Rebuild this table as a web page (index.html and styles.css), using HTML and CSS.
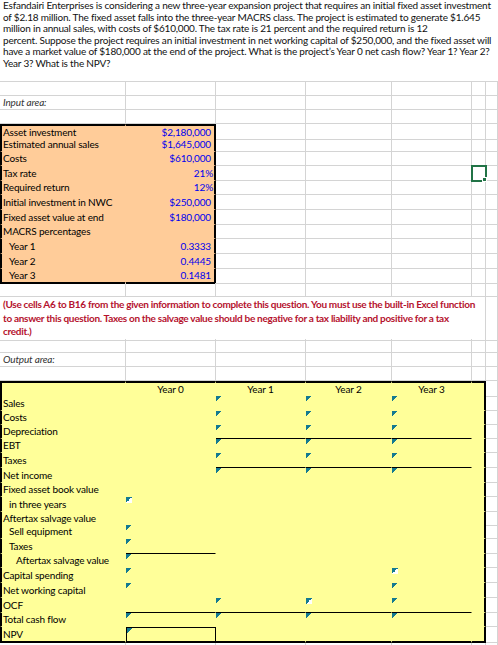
FILE: index.html
```html
<!DOCTYPE html>
<html>
<head>
<meta charset="utf-8">
<link rel="stylesheet" href="styles.css">
</head>
<body>
<div class="intro">Esfandairi Enterprises is considering a new three-year expansion project that requires an initial fixed asset investment<br>of $2.18 million. The fixed asset falls into the three-year MACRS class. The project is estimated to generate $1.645<br>million in annual sales, with costs of $610,000. The tax rate is 21 percent and the required return is 12<br>percent. Suppose the project requires an initial investment in net working capital of $250,000, and the fixed asset will<br>have a market value of $180,000 at the end of the project. What is the project’s Year 0 net cash flow? Year 1? Year 2?<br>Year 3? What is the NPV?</div>
<div class="sheet">
  <div class="row h14"><span></span><span></span><span></span><span></span><span></span><span></span><span></span></div>
  <div class="row h14"><span class="it">Input area:</span><span></span><span></span><span></span><span></span><span></span><span></span></div>
  <div class="row h14"><span></span><span></span><span></span><span></span><span></span><span></span><span></span></div>

  <div class="row h14"><span class="o bl bt">Asset investment</span><span class="o br bt r v">$2,180,000</span><span></span><span></span><span></span><span></span><span></span></div>
  <div class="row h14"><span class="o bl">Estimated annual sales</span><span class="o br r v">$1,645,000</span><span></span><span></span><span></span><span></span><span></span></div>
  <div class="row h14"><span class="o bl">Costs</span><span class="o br r v">$610,000</span><span></span><span></span><span></span><span></span><span></span></div>
  <div class="row h15"><span class="o bl">Tax rate</span><span class="o br r v pc">21%</span><span></span><span></span><span></span><span class="sel"></span><span></span></div>
  <div class="row h14"><span class="o bl">Required return</span><span class="o br r v pc">12%</span><span></span><span></span><span></span><span></span><span></span></div>
  <div class="row h15"><span class="o bl">Initial investment in NWC</span><span class="o br r v">$250,000</span><span></span><span></span><span></span><span></span><span></span></div>
  <div class="row h15"><span class="o bl">Fixed asset value at end</span><span class="o br r v">$180,000</span><span></span><span></span><span></span><span></span><span></span></div>
  <div class="row h14"><span class="o bl">MACRS percentages</span><span class="o br"></span><span></span><span></span><span></span><span></span><span></span></div>
  <div class="row h15"><span class="o bl i1">Year 1</span><span class="o br r v">0.3333</span><span></span><span></span><span></span><span></span><span></span></div>
  <div class="row h15"><span class="o bl i1">Year 2</span><span class="o br r v">0.4445</span><span></span><span></span><span></span><span></span><span></span></div>
  <div class="row h14"><span class="o bl bb i1">Year 3</span><span class="o br bb r v">0.1481</span><span></span><span></span><span></span><span></span><span></span></div>

  <div class="row h14"><span></span><span></span><span></span><span></span><span></span><span></span><span></span></div>
  <div class="row h42"><span class="note">(Use cells A6 to B16 from the given information to complete this question. You must use the built-in Excel function<br>to answer this question. Taxes on the salvage value should be negative for a tax liability and positive for a tax<br>credit.)</span><span></span></div>
  <div class="row h14"><span></span><span></span><span></span><span></span><span></span><span></span><span></span></div>
  <div class="row h14"><span class="it">Output area:</span><span></span><span></span><span></span><span></span><span></span><span></span></div>
  <div class="row h14"><span></span><span></span><span></span><span></span><span></span><span></span><span></span></div>

  <div class="row h15"><span class="y bl bt"></span><span class="y bt ctr">Year 0</span><span class="y bt ctr">Year 1</span><span class="y bt ctr">Year 2</span><span class="y bt ctr">Year 3</span><span class="y bt br"></span><span></span></div>
  <div class="row h15"><span class="y bl">Sales</span><span class="y"></span><span class="y t"></span><span class="y t"></span><span class="y t"></span><span class="y br"></span><span></span></div>
  <div class="row h14"><span class="y bl">Costs</span><span class="y"></span><span class="y t"></span><span class="y t"></span><span class="y t"></span><span class="y br"></span><span></span></div>
  <div class="row h14"><span class="y bl">Depreciation</span><span class="y"></span><span class="y t ul"></span><span class="y t ul"></span><span class="y t ul"></span><span class="y br"></span><span></span></div>
  <div class="row h14"><span class="y bl">EBT</span><span class="y"></span><span class="y t"></span><span class="y t"></span><span class="y t"></span><span class="y br"></span><span></span></div>
  <div class="row h15"><span class="y bl">Taxes</span><span class="y"></span><span class="y t ul"></span><span class="y t ul"></span><span class="y t ul"></span><span class="y br"></span><span></span></div>
  <div class="row h15"><span class="y bl">Net income</span><span class="y"></span><span class="y t"></span><span class="y t"></span><span class="y t"></span><span class="y br"></span><span></span></div>
  <div class="row h14"><span class="y bl">Fixed asset book value</span><span class="y"></span><span class="y"></span><span class="y"></span><span class="y"></span><span class="y br"></span><span></span></div>
  <div class="row h15"><span class="y bl i1">in three years</span><span class="y tw"></span><span class="y"></span><span class="y"></span><span class="y"></span><span class="y br"></span><span></span></div>
  <div class="row h13"><span class="y bl">Aftertax salvage value</span><span class="y"></span><span class="y"></span><span class="y"></span><span class="y"></span><span class="y br"></span><span></span></div>
  <div class="row h14"><span class="y bl i1">Sell equipment</span><span class="y t"></span><span class="y"></span><span class="y"></span><span class="y"></span><span class="y br"></span><span></span></div>
  <div class="row h15"><span class="y bl i1">Taxes</span><span class="y t ul"></span><span class="y"></span><span class="y"></span><span class="y"></span><span class="y br"></span><span></span></div>
  <div class="row h14"><span class="y bl i2">Aftertax salvage value</span><span class="y t"></span><span class="y"></span><span class="y"></span><span class="y"></span><span class="y br"></span><span></span></div>
  <div class="row h15"><span class="y bl">Capital spending</span><span class="y t"></span><span class="y"></span><span class="y"></span><span class="y tw"></span><span class="y br"></span><span></span></div>
  <div class="row h15"><span class="y bl">Net working capital</span><span class="y t"></span><span class="y"></span><span class="y"></span><span class="y t"></span><span class="y br"></span><span></span></div>
  <div class="row h15"><span class="y bl">OCF</span><span class="y ul"></span><span class="y t ul"></span><span class="y tw ul"></span><span class="y t ul"></span><span class="y br"></span><span></span></div>
  <div class="row h14"><span class="y bl">Total cash flow</span><span class="y t"></span><span class="y t"></span><span class="y t"></span><span class="y t"></span><span class="y br"></span><span></span></div>
  <div class="row h16"><span class="y bl bb">NPV</span><span class="y t bx bb"></span><span class="y bb"></span><span class="y bb"></span><span class="y bb"></span><span class="y bb br"></span><span></span></div>
  <div class="row h14"><span></span><span></span><span></span><span></span><span></span><span></span><span></span></div>
</div>
</body>
</html>
```
FILE: styles.css
```css
html, body {
  margin: 0;
  padding: 0;
  overflow: hidden;
  background: #fff;
}
body {
  font-family: Lato, "Liberation Sans", sans-serif;
  font-size: 10px;
  letter-spacing: -0.15px;
  color: #000;
}
.intro {
  height: 82px;
  box-sizing: border-box;
  border-bottom: 1px solid #d4d4d4;
  padding: 0 0 0 3px;
  line-height: 11.5px;
  letter-spacing: -0.2px;
  white-space: nowrap;
  color: #111;
}
.row {
  display: grid;
  grid-template-columns: 126px 90px 90px 86px 80px 14px 1fr;
}
.h13 { height: 13px; }
.h14 { height: 14px; }
.h15 { height: 15px; }
.h16 { height: 16px; }
.h42 { height: 42px; }

.sheet span {
  box-sizing: border-box;
  position: relative;
  display: flex;
  align-items: flex-end;
  min-width: 0;
  white-space: nowrap;
  line-height: 12px;
  padding: 0 3px 1px;
  border-style: solid;
  border-color: #d4d4d4;
  border-width: 0 1px 1px 0;
}
.sheet .note {
  grid-column: 1 / 7;
  display: block;
  line-height: 13.6px;
  padding-top: 1px;
  color: #b5122e;
  font-weight: bold;
  letter-spacing: -0.3px;
}
.sheet .it {
  font-style: italic;
  color: #333;
}
.sheet .o {
  background: #fc9;
  border-color: transparent;
}
.sheet .y {
  background: #ff9;
  border-color: transparent;
}
.sheet .r {
  justify-content: flex-end;
}
.sheet .ctr {
  justify-content: center;
}
.sheet .v {
  color: #0000ee;
}
.sheet .ul {
  border-bottom: 1px solid #000;
}
.sheet .bx {
  border: 1px solid #000;
}
.sheet .bl {
  border-left: 2px solid #000;
  padding-left: 1px;
}
.sheet .br {
  border-right: 2px solid #000;
}
.sheet .bt {
  border-top: 2px solid #000;
}
.sheet .bb {
  border-bottom: 2px solid #000;
}
.sheet .pc {
  padding-right: 1px;
}
.sheet .i1 {
  padding-left: 7px;
}
.sheet .i2 {
  padding-left: 14px;
}
.sheet .t::before,
.sheet .tw::before {
  content: "";
  position: absolute;
  left: 0;
  top: 0;
  width: 6px;
  height: 5px;
  background: linear-gradient(to bottom right, #147a91 50%, transparent 50%);
}
.sheet .tw::before {
  height: 6px;
  background: linear-gradient(to bottom right, #147a91 50%, #fff 50%);
}
.sheet .sel {
  z-index: 3;
  outline: 2px solid #217346;
  outline-offset: -1px;
}
.sheet .sel::after {
  content: "";
  position: absolute;
  right: -2px;
  bottom: -2px;
  width: 3px;
  height: 3px;
  background: #217346;
  border: 1px solid #fff;
}
```
